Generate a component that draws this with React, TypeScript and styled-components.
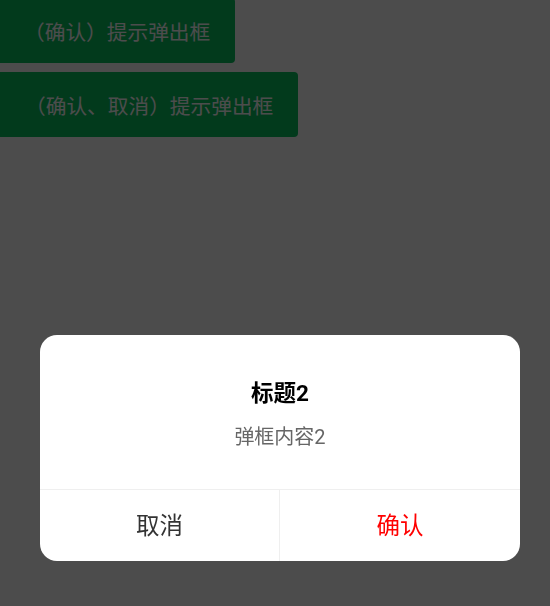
import React from "react";
import styled, { createGlobalStyle } from "styled-components";

const GlobalStyle = createGlobalStyle`
  html, body {
    margin: 0;
    padding: 0;
    background: #ffffff;
    font-family: Roboto, "Noto Sans CJK SC", sans-serif;
  }
`;

const Page = styled.div`
  display: flex;
  flex-direction: column;
  align-items: flex-start;
  gap: 9px;
  margin-top: -2px;
`;

const GreenButton = styled.button<{ $padLeft: number }>`
  height: 65px;
  padding: 0 25px 0 ${(p) => p.$padLeft}px;
  border: none;
  border-radius: 0 4px 4px 0;
  background: #07c160;
  color: #ffffff;
  font-family: Roboto, "Noto Sans CJK SC", sans-serif;
  font-size: 20.7px;
  display: flex;
  align-items: center;
  cursor: pointer;
`;

const Mask = styled.div`
  position: fixed;
  inset: 0;
  background: rgba(0, 0, 0, 0.7);
  display: flex;
  flex-direction: column;
  justify-content: flex-end;
  align-items: flex-start;
  padding: 0 0 45px 40px;
`;

const Dialog = styled.div`
  width: 480px;
  background: #ffffff;
  border-radius: 17px;
  overflow: hidden;
  display: flex;
  flex-direction: column;
`;

const Body = styled.div`
  display: flex;
  flex-direction: column;
  align-items: center;
  padding: 43px 24px 38px;
  gap: 15px;
`;

const Title = styled.div`
  font-size: 22.5px;
  line-height: 30px;
  font-weight: 700;
  color: #000000;
`;

const Content = styled.div`
  font-size: 20px;
  line-height: 28px;
  color: #666666;
`;

const Footer = styled.div`
  display: grid;
  grid-template-columns: 1fr 1fr;
  border-top: 1px solid #efefef;
  height: 71px;
`;

const FooterButton = styled.div<{ $color: string; $divider?: boolean }>`
  display: flex;
  align-items: center;
  justify-content: center;
  padding-bottom: 3px;
  font-size: 23.5px;
  color: ${(p) => p.$color};
  border-right: ${(p) => (p.$divider ? "1px solid #efefef" : "none")};
`;

export default function App() {
  return (
    <>
      <GlobalStyle />
      <Page>
        <GreenButton $padLeft={24}>（确认）提示弹出框</GreenButton>
        <GreenButton $padLeft={25}>（确认、取消）提示弹出框</GreenButton>
      </Page>
      <Mask>
        <Dialog>
          <Body>
            <Title>标题2</Title>
            <Content>弹框内容2</Content>
          </Body>
          <Footer>
            <FooterButton $color="#333333" $divider>取消</FooterButton>
            <FooterButton $color="#ff0000">确认</FooterButton>
          </Footer>
        </Dialog>
      </Mask>
    </>
  );
}
